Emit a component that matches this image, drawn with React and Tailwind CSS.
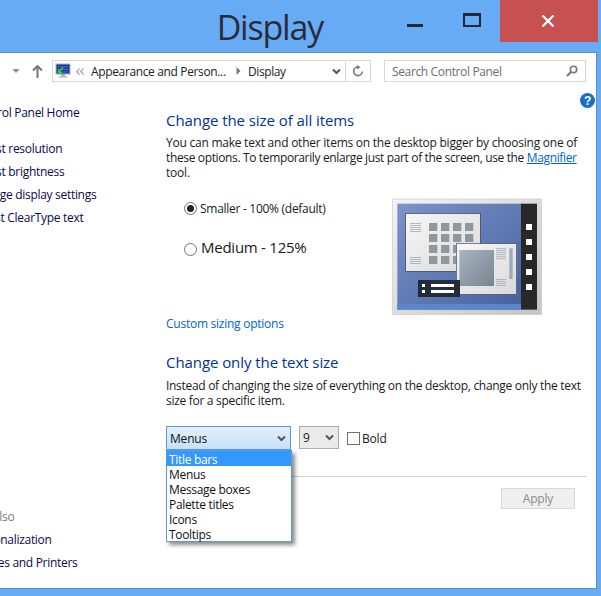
const font = { fontFamily: '"Open Sans", "Noto Sans", sans-serif' };

function Preview() {
  const cells = [];
  for (let r = 0; r < 4; r++) for (let c = 0; c < 4; c++) cells.push(<rect key={r + '-' + c} x={147 + c * 36} y={102 + r * 33} width={25} height={24} fill="#8f979f" />);
  const lines = (x, y, w, n) => Array.from({ length: n }, (_, i) => <rect key={i} x={x} y={y + i * 6} width={w} height={2.5} fill="#a9adb0" />);
  return (
    <svg width="170" height="135" viewBox="0 0 510 405" className="block">
      <defs>
        <linearGradient id="f" x1="0" y1="0" x2="1" y2="1"><stop offset="0" stopColor="#f4f4f4" /><stop offset="1" stopColor="#c4c4c4" /></linearGradient>
        <linearGradient id="b" x1="0" y1="0" x2="1" y2="1"><stop offset="0" stopColor="#7b95c8" /><stop offset="1" stopColor="#46609f" /></linearGradient>
        <linearGradient id="w" x1="0" y1="0" x2="1" y2="1"><stop offset="0" stopColor="#f7f7f7" /><stop offset="1" stopColor="#d9d9d9" /></linearGradient>
        <linearGradient id="p" x1="0" y1="0" x2="1" y2="1"><stop offset="0" stopColor="#a9b5c2" /><stop offset="1" stopColor="#76858f" /></linearGradient>
      </defs>
      <rect x="38" y="30" width="447" height="347" fill="url(#f)" stroke="#c9c9c9" strokeWidth="2" />
      <rect x="52" y="44" width="372" height="318" fill="url(#b)" />
      <rect x="52" y="345" width="372" height="17" fill="#5c86cc" />
      <rect x="423" y="44" width="48" height="318" fill="#282828" />
      {[105, 150, 195, 240, 285].map((y) => <rect key={y} x="438" y={y} width="18" height="18" fill="#fff" />)}
      <rect x="77" y="73" width="224" height="174" fill="url(#w)" stroke="#2b3a55" strokeWidth="2" />
      {lines(90, 102, 33, 5)}
      {lines(90, 204, 33, 4)}
      {cells}
      <rect x="229" y="164" width="181" height="152" fill="url(#w)" stroke="#3e4d66" strokeWidth="2" />
      <rect x="238" y="183" width="104" height="108" fill="url(#p)" />
      {lines(348, 178, 30, 6)}
      {lines(348, 270, 30, 4)}
      <rect x="388" y="178" width="10" height="92" fill="#9aabbd" />
      <rect x="114" y="273" width="126" height="51" fill="#232a3a" />
      <rect x="126" y="285" width="9" height="9" fill="#fff" />
      <rect x="126" y="303" width="9" height="9" fill="#fff" />
      <rect x="153" y="285" width="69" height="9" fill="#fff" />
      <rect x="153" y="303" width="69" height="9" fill="#fff" />
    </svg>
  );
}

function Chevron({ className }) {
  return (
    <svg width="9" height="7" viewBox="0 0 9 7" className={className}>
      <path d="M1 1.5 L4.5 5 L8 1.5" fill="none" stroke="#555" strokeWidth="2" />
    </svg>
  );
}

function Radio({ on }) {
  return (
    <span className="w-[13px] h-[13px] rounded-full border border-[#707070] bg-white flex items-center justify-center shrink-0">
      {on && <span className="w-[7px] h-[7px] rounded-full bg-[#222]" />}
    </span>
  );
}

const navItems = [
  ['Control Panel Home', '-ml-[28px]', 'mb-[21px]'],
  ['Adjust resolution', '-ml-[28px]', 'mb-[8px]'],
  ['Adjust brightness', '-ml-[28px]', 'mb-[8px]'],
  ['Change display settings', '-ml-[28px]', 'mb-[8px]'],
  ['Adjust ClearType text', '-ml-[29px]', ''],
];

export default function App() {
  return (
    <div style={font} className="w-[601px] h-[596px] bg-[#67abf5] flex flex-col overflow-hidden text-[12px] leading-[15px] text-[#1a1a1a]">
      <div className="h-[52px] shrink-0 flex">
        <div className="w-[407px] shrink-0 flex justify-end pr-[84px]">
          <span className="text-[34px] leading-[54px] text-[#2b2b38] tracking-[-1.2px]">Display</span>
        </div>
        <div className="w-[16px] mt-[24px] h-[3px] bg-[#222a38] shrink-0" />
        <div className="w-[18px] h-[14px] mt-[13px] ml-[40px] border-2 border-t-[3px] border-[#222a38] shrink-0" />
        <div className="ml-[19px] w-[98px] h-[42px] bg-[#c75050] flex items-center justify-center pr-[2px]">
          <svg width="14" height="12" viewBox="0 0 14 12"><path d="M1.5 0.5 L12.5 11.5 M12.5 0.5 L1.5 11.5" stroke="#fff" strokeWidth="2.2" /></svg>
        </div>
      </div>

      <div className="w-[597px] h-[537px] shrink-0 bg-white border-t border-r border-b border-[#5a8fc6] flex flex-col">
        <div className="h-[37px] flex items-start pt-[7px] shrink-0">
          <div className="w-[52px] h-[22px] relative shrink-0 flex items-center">
            <svg width="10" height="6" viewBox="0 0 10 6" className="ml-[11px]"><path d="M1.5 1 H8.5 L5 5 Z" fill="#8a8a8a" /></svg>
            <svg width="11" height="13" viewBox="0 0 11 13" className="ml-[11px]"><path d="M5.5 1 V13 M1 5.5 L5.5 1 L10 5.5" fill="none" stroke="#777" strokeWidth="2" /></svg>
          </div>
          <div className="w-[319px] h-[22px] border border-[#d9d9d9] flex items-center shrink-0">
            <svg width="16" height="16" viewBox="0 0 16 16" className="ml-[2px] shrink-0">
              <rect x="1" y="1" width="14" height="10" fill="#1c3a94" stroke="#aab4bd" />
              <path d="M3 4H13M3 6.5H13M3 9H13" stroke="#4d6fd1" />
              <path d="M3.5 9.5 L8 4.5 M3.5 6 V9.5 H7" stroke="#35d42e" strokeWidth="1.4" fill="none" />
              <rect x="6" y="11" width="4" height="2" fill="#a8a8a8" /><rect x="4" y="13" width="8" height="2" fill="#cdcdcd" />
            </svg>
            <svg width="8" height="7" viewBox="0 0 8 7" className="ml-[5px] shrink-0"><path d="M3.5 0.5 L0.8 3.5 L3.5 6.5 M7.5 0.5 L4.8 3.5 L7.5 6.5" fill="none" stroke="#888" strokeWidth="1.1" /></svg>
            <span className="ml-[7px] w-[145px] whitespace-nowrap tracking-[-0.36px] text-[#222]">Appearance and Person...</span>
            <svg width="5" height="8" viewBox="0 0 5 8"><path d="M0.5 0 L4.5 4 L0.5 8 Z" fill="#777" /></svg>
            <span className="ml-[7px] tracking-[-0.4px] text-[#222]">Display</span>
            <Chevron className="ml-auto mr-[4px]" />
            <div className="w-[25px] h-full border-l border-[#d9d9d9] flex items-center justify-center">
              <svg width="12" height="12" viewBox="0 0 12 12"><path d="M6 2 A4.3 4.3 0 1 0 10.3 6.5" fill="none" stroke="#777" strokeWidth="1.6" /><path d="M5 0 L8.5 2.3 L5 4.5 Z" fill="#777" /></svg>
            </div>
          </div>
          <div className="ml-[13px] w-[202px] h-[22px] border border-[#d9d9d9] flex items-center justify-between pl-[7px] pr-[7px] shrink-0">
            <span className="text-[#6d6d6d] tracking-[-0.36px]">Search Control Panel</span>
            <svg width="12" height="12" viewBox="0 0 12 12"><circle cx="7.5" cy="4.5" r="3.2" fill="none" stroke="#777" strokeWidth="1.6" /><path d="M5 7 L1 11" stroke="#777" strokeWidth="2" /></svg>
          </div>
        </div>

        <div className="flex-1 flex min-h-0">
          <div className="w-[166px] shrink-0 overflow-hidden flex flex-col pt-[15px] text-[#0a0a50] whitespace-nowrap tracking-[-0.3px]">
            {navItems.map(([t, ml, mb]) => <div key={t} className={ml + ' ' + mb}>{t}</div>)}
            <div className="mt-[284px] -ml-[29px] text-[#777]">See also</div>
            <div className="mt-[8px] -ml-[30px]">Personalization</div>
            <div className="mt-[8px] -ml-[31px]">Devices and Printers</div>
          </div>

          <div className="w-[420px] shrink-0 relative flex flex-col tracking-[-0.2px]">
            <svg width="15" height="15" viewBox="0 0 15 15" className="absolute left-[414px] top-[3px]">
              <circle cx="7.5" cy="7.5" r="7.5" fill="#1a6fc4" />
              <text x="7.5" y="12" textAnchor="middle" fontSize="12" fontWeight="700" fill="#fff" fontFamily="Liberation Sans">?</text>
            </svg>
            <div className="pt-[20px] text-[15px] leading-[20px] text-[#003399] tracking-[-0.07px]">Change the size of all items</div>
            <p className="mt-[5px] w-[420px] whitespace-nowrap text-[12px]">
              <span className="block tracking-[-0.24px]">You can make text and other items on the desktop bigger by choosing one of</span>
              <span className="block tracking-[-0.36px]">these options. To temporarily enlarge just part of the screen, use the <span className="text-[#0066cc] underline">Magnifier</span></span>
              <span className="block">tool.</span>
            </p>
            <div className="flex mt-[9px] h-[135px]">
              <div className="w-[214px] shrink-0 pl-[18px]">
                <div className="flex items-center gap-[3px] mt-[12px] h-[15px]"><Radio on /><span className="tracking-[-0.28px]">Smaller - 100% (default)</span></div>
                <div className="flex items-center gap-[4px] mt-[22px] h-[20px] pt-[3px]"><Radio /><span className="text-[15px] -mt-[5px] tracking-[-0.25px]">Medium - 125%</span></div>
              </div>
              <Preview />
            </div>
            <div className="-mt-[8px] text-[#0066cc] tracking-[-0.25px]">Custom sizing options</div>
            <div className="mt-[21px] text-[15px] leading-[20px] text-[#003399] tracking-[-0.07px]">Change only the text size</div>
            <p className="mt-[6px] w-[420px] whitespace-nowrap tracking-[-0.3px]">
              <span className="block">Instead of changing the size of everything on the desktop, change only the text</span>
              <span className="block">size for a specific item.</span>
            </p>
            <div className="flex items-start mt-[18px]">
              <div className="w-[125px] h-[24px] border border-[#5b9bd5] bg-gradient-to-b from-[#e3effb] to-[#c6e0f8] flex items-center justify-between pl-[3px] pr-[4px]">
                <span className="text-[#111]">Menus</span><Chevron />
              </div>
              <div className="ml-[8px] w-[40px] h-[23px] border border-[#adadad] bg-[#eaeaea] flex items-center justify-between pl-[3px] pr-[4px]">
                <span>9</span><Chevron />
              </div>
              <div className="ml-[8px] w-[13px] h-[13px] mt-[6px] border border-[#707070] bg-white" />
              <span className="ml-[2px] mt-[5px]">Bold</span>
            </div>
            <div className="mt-[26px] w-[420px] h-[1px] bg-[#d0d0d0]" />
            <div className="mt-[11px] ml-[335px] w-[74px] h-[21px] border border-[#d9d9d9] bg-[#efefef] flex items-center justify-center text-[#8c8c8c]">Apply</div>

            <div className="absolute left-0 top-[360px] w-[126px] h-[92px] border border-[#5b9bd5] bg-white shadow-[3px_3px_4px_rgba(0,0,0,0.45)] text-[#111] flex flex-col tracking-[-0.32px] leading-[17px]">
              <div className="bg-[#3399ff] text-white pl-[2px] h-[15px]">Title bars</div>
              {['Menus', 'Message boxes', 'Palette titles', 'Icons', 'Tooltips'].map((t) => <div key={t} className="pl-[2px] h-[15px]">{t}</div>)}
            </div>
          </div>
        </div>
      </div>
    </div>
  );
}
